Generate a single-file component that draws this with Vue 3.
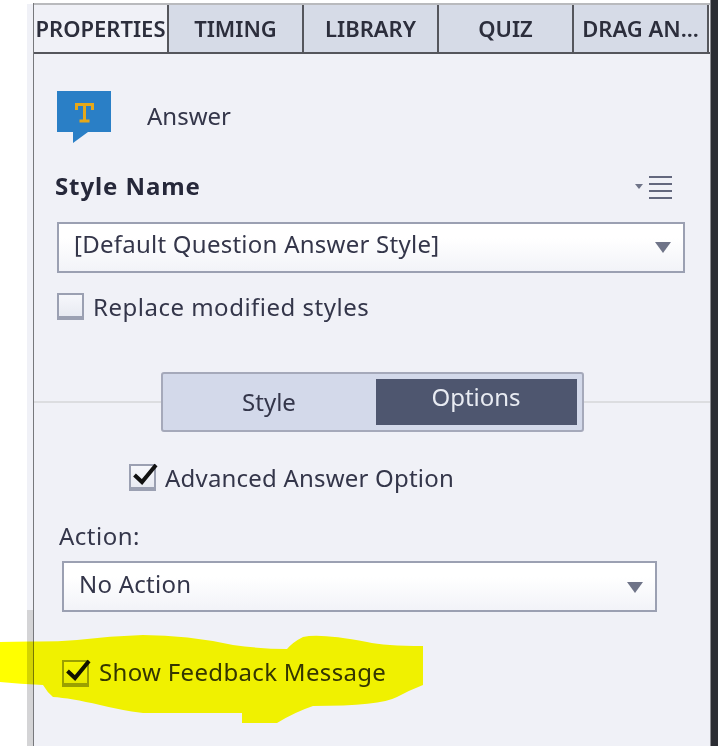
<script setup>
const tabs = [
  { label: 'PROPERTIES', active: true },
  { label: 'TIMING' },
  { label: 'LIBRARY' },
  { label: 'QUIZ' },
  { label: 'DRAG AN...' },
];
// outline of the marker stroke over the last checkbox
const marker =
  'M0 42 L30 41.500 Q53 42 77 40 Q110 36 143 35 Q187 35 233 45 Q262 49 287 49 Q293 42 303 37 Q320 33 367 42 Q385 46 423 46 L423 85 Q410 90 397 97 Q380 106 313 106 Q295 112 277 123 L242 123 L242 113 L143 113 Q120 110 100 105 Q70 98 53 97 Q47 92 43 85 Q20 84 0 82 Z';
</script>

<template>
  <div class="page">
    <div class="gutter"></div>
    <div class="strip"></div>
    <div class="panel">
      <div class="tabs">
        <div v-for="tab in tabs" :key="tab.label" class="tab" :class="{ active: tab.active }">{{ tab.label }}</div>
      </div>

      <div class="body">
        <div class="object-row">
          <svg class="object-icon" width="54" height="52" viewBox="0 0 54 52">
            <path d="M0 0H54V41H31L16 52V41H0Z" fill="#2a7fc6" />
            <path d="M19.500 19V13.500H35.500V19M27.500 13.500V30M22.500 30H32.500" fill="none" stroke="#e5a81a" stroke-width="3" />
          </svg>
          <span class="object-name">Answer</span>
        </div>

        <div class="style-head">
          <span class="style-name">Style Name</span>
          <svg class="menu-icon" width="38" height="24" viewBox="0 0 38 24">
            <path d="M0 9H8L4 14Z" fill="#6f7488" />
            <path d="M14 2H37M14 9H37M14 16H37M14 23H37" stroke="#63687e" stroke-width="2" />
          </svg>
        </div>

        <div class="select style-select">
          <span>[Default Question Answer Style]</span>
          <i class="caret"></i>
        </div>

        <label class="check-row replace-row">
          <span class="box"></span>
          <span>Replace modified styles</span>
        </label>

        <div class="segment-row">
          <div class="rule"></div>
          <div class="segment">
            <div class="seg-item">Style</div>
            <div class="seg-item on">Options</div>
          </div>
          <div class="rule"></div>
        </div>

        <label class="check-row advanced-row">
          <span class="box">
            <svg width="29" height="27" viewBox="0 0 29 27"><path d="M5.500 12L13 19L27 2" fill="none" stroke="#111" stroke-width="4" /></svg>
          </span>
          <span>Advanced Answer Option</span>
        </label>

        <div class="action-label">Action:</div>
        <div class="select action-select">
          <span>No Action</span>
          <i class="caret"></i>
        </div>

        <label class="check-row feedback-row">
          <span class="box">
            <svg width="29" height="27" viewBox="0 0 29 27"><path d="M5.500 12L13 19L27 2" fill="none" stroke="#111" stroke-width="4" /></svg>
          </span>
          <span class="feedback-text">Show Feedback Message</span>
        </label>
      </div>
    </div>
    <div class="edge"></div>

    <svg class="marker" width="423" height="123" viewBox="0 0 423 123">
      <path :d="marker" fill="#ffff00" />
    </svg>
  </div>
</template>

<style>
body {
  margin: 0;
  background: #fff;
}
</style>

<style scoped>
.page {
  position: relative;
  display: flex;
  width: 720px;
  height: 746px;
  overflow: hidden;
  background: #fff;
  font-family: "Noto Sans", "DejaVu Sans", sans-serif;
  font-size: 24px;
  color: #34364a;
}
.gutter {
  flex: none;
  width: 27px;
}
.strip {
  flex: none;
  width: 6px;
  margin-top: 4px;
  background: linear-gradient(#f0f1f7 0, #f0f1f7 606px, #d4d4d6 606px);
}
.panel {
  flex: none;
  display: flex;
  flex-direction: column;
  width: 677px;
  margin-top: 3px;
  border-left: 1.500px solid #77787c;
  box-sizing: border-box;
  background: #f0f1f7;
  filter: blur(0.5px);
}
.edge {
  flex: none;
  width: 8px;
  margin-right: 2px;
  background: #2b2d33;
  border-left: 1px solid #8a8b90;
  box-sizing: border-box;
}
.tabs {
  display: flex;
  height: 51px;
  border-top: 2px solid #b9babd;
  border-bottom: 2px solid #55565c;
  box-sizing: border-box;
}
.tab {
  flex: 0 0 135px;
  display: flex;
  align-items: center;
  justify-content: center;
  box-sizing: border-box;
  padding-bottom: 2px;
  border-right: 2px solid #55565c;
  background: #d6dbe7;
  font-size: 22px;
  font-weight: 600;
  white-space: nowrap;
  color: #2c2e3c;
}
.tab.active {
  background: #f0f1f7;
}
.body {
  display: flex;
  flex-direction: column;
  padding-left: 23px;
}
.object-row {
  display: flex;
  align-items: flex-start;
  margin-top: 37px;
  height: 52px;
}
.object-name {
  margin-left: 36px;
  line-height: 50px;
}
.style-head {
  display: flex;
  justify-content: space-between;
  align-items: center;
  width: 618px;
  margin-top: 27px;
  margin-left: -2px;
  height: 30px;
}
.style-name {
  font-weight: 700;
  letter-spacing: 0.9px;
  color: #26283a;
}
.menu-icon {
  margin-top: 4px;
}
.select {
  display: flex;
  align-items: center;
  justify-content: space-between;
  box-sizing: border-box;
  height: 51px;
  padding: 0 12px 8px 15px;
  border: 2px solid #9ba0b2;
  background: linear-gradient(#fff 30%, #f2f3f8);
  white-space: nowrap;
  letter-spacing: 0.25px;
}
.style-select {
  width: 628px;
  margin-top: 22px;
}
.action-select {
  width: 595px;
  margin-top: 9px;
  margin-left: 5px;
  padding-bottom: 6px;
}
.caret {
  width: 0;
  height: 0;
  margin-top: 8px;
  border-left: 8px solid transparent;
  border-right: 8px solid transparent;
  border-top: 11px solid #6f7488;
}
.check-row {
  display: flex;
  align-items: center;
  gap: 9px;
  height: 28px;
  white-space: nowrap;
}
.box {
  display: block;
  width: 27px;
  height: 27px;
  flex: none;
  box-sizing: border-box;
  border: 2.500px solid #9ba0b2;
  border-bottom-width: 4px;
  background: linear-gradient(#f6f7fb, #e8eaf2);
}
.box svg {
  display: block;
  margin: -2.500px;
}
.replace-row {
  margin-top: 19px;
  letter-spacing: 0.5px;
}
.segment-row {
  display: flex;
  align-items: center;
  height: 60px;
  margin-top: 52px;
  margin-left: -23px;
}
.rule {
  flex: 1;
  height: 1.500px;
  background: #dcdde0;
}
.segment {
  display: flex;
  width: 423px;
  height: 60px;
  padding: 5px 5px 5px 0;
  box-sizing: border-box;
  border: 2px solid #a5a9ba;
  border-radius: 3px;
  background: #d3d9ea;
}
.seg-item {
  display: flex;
  align-items: center;
  justify-content: center;
  flex: 1;
  padding-bottom: 2px;
}
.seg-item.on {
  flex: none;
  width: 201px;
  padding-bottom: 12px;
  box-sizing: border-box;
  background: #4e566f;
  color: #e8ebf2;
}
.advanced-row {
  margin-top: 31px;
  margin-left: 72px;
  letter-spacing: 0.2px;
}
.action-label {
  margin-top: 29px;
  margin-left: 2px;
  line-height: 32px;
  letter-spacing: 0.5px;
}
.feedback-row {
  margin-top: 47px;
  margin-left: 5px;
  gap: 10px;
  letter-spacing: 0.33px;
}
.feedback-text {
  margin-bottom: 4px;
}
.marker {
  position: absolute;
  left: 0;
  top: 600px;
  mix-blend-mode: multiply;
}
</style>
